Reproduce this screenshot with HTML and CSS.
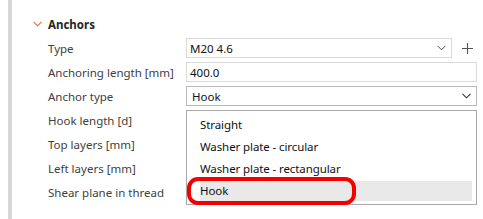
FILE: index.html
```html
<!DOCTYPE html>
<html lang="en">
<head>
  <meta charset="UTF-8" />
  <title>Anchors</title>
  <link rel="stylesheet" href="styles.css">
</head>
<body>
  <div class="page">
    <div class="side-bar"></div>

    <div class="panel">
      <div class="section-head">
        <svg class="chevron" width="9" height="6" viewBox="0 0 9 6">
          <path d="M0.5 0.8 L4.5 4.8 L8.5 0.8" fill="none" stroke="#e67a45" stroke-width="1.2"/>
        </svg>
        <span>Anchors</span>
      </div>

      <div class="props">
        <div class="label">Type</div>
        <div class="field with-add">
          <div class="box combo">
            <span>M20 4.6</span>
            <svg width="9" height="6" viewBox="0 0 9 6"><path d="M0.5 0.8 L4.5 4.8 L8.5 0.8" fill="none" stroke="#555" stroke-width="1"/></svg>
          </div>
          <svg class="add" width="11" height="11" viewBox="0 0 11 11">
            <path d="M5.5 0 V11 M0 5.5 H11" stroke="#555" stroke-width="1.1"/>
          </svg>
        </div>

        <div class="label">Anchoring length [mm]</div>
        <div class="field">
          <div class="box">400.0</div>
        </div>

        <div class="label">Anchor type</div>
        <div class="field">
          <div class="box combo active">
            <span>Hook</span>
            <svg width="9" height="6" viewBox="0 0 9 6"><path d="M0.5 0.8 L4.5 4.8 L8.5 0.8" fill="none" stroke="#333" stroke-width="1.1"/></svg>
          </div>
        </div>

        <div class="label">Hook length [d]</div>
        <div class="field"></div>

        <div class="label">Top layers [mm]</div>
        <div class="field"></div>

        <div class="label">Left layers [mm]</div>
        <div class="field"></div>

        <div class="label">Shear plane in thread</div>
        <div class="field"></div>
      </div>
    </div>

    <!-- open combo list -->
    <div class="dropdown">
      <div class="option">Straight</div>
      <div class="option">Washer plate - circular</div>
      <div class="option">Washer plate - rectangular</div>
      <div class="option selected">Hook</div>
    </div>

    <div class="mark"></div>
  </div>
</body>
</html>
```

FILE: styles.css
```css
body {
  margin: 0;
  padding: 0;
  background-color: #fff;
  font-family: "Noto Sans", "Open Sans", sans-serif;
  font-size: 11.5px;
  color: #1a1a1a;
}

.page {
  position: relative;
  display: flex;
  width: 483px;
  height: 219px;
  overflow: hidden;
}

.side-bar {
  margin-left: 8px;
  width: 4px;
  height: 219px;
  background-color: #d6d6d6;
}

.panel {
  padding-left: 21px;
  flex: 1;
}

.section-head {
  display: flex;
  align-items: center;
  height: 20px;
  margin-top: 14px;
  margin-bottom: 2px;
  font-weight: bold;
  color: #262626;
}

.section-head .chevron {
  margin-right: 6px;
  margin-top: -1px;
}

.props {
  display: grid;
  grid-template-columns: 138px 291px;
  grid-auto-rows: 24px;
  align-items: center;
  padding-left: 15px;
}

.label {
  color: #404040;
  white-space: nowrap;
}

.field {
  display: flex;
  align-items: center;
  height: 24px;
}

.box {
  box-sizing: border-box;
  flex: 1;
  height: 20px;
  border: 1px solid #dadada;
  padding: 0 4px 0 3px;
  display: flex;
  align-items: center;
  color: #111;
}

.combo {
  justify-content: space-between;
  padding-right: 5px;
}

.combo.active {
  border-color: #b9b9b9;
  padding-left: 5px;
}

.with-add .box {
  flex: 0 0 266px;
}

.add {
  margin-left: 10px;
}

.dropdown {
  position: absolute;
  left: 186px;
  top: 110px;
  box-sizing: border-box;
  width: 291px;
  height: 95px;
  border: 1px solid #a9a9a9;
  padding: 3px 4px 2px 1px;
  background-color: #fff;
  letter-spacing: -0.1px;
}

.option {
  height: 22px;
  line-height: 22px;
  padding-left: 12px;
  color: #111;
}

.option.selected {
  background-color: #e9e9e9;
  background-clip: content-box;
  padding-top: 1px;
  padding-bottom: 1px;
  height: 20px;
  line-height: 20px;
}

.mark {
  position: absolute;
  left: 187px;
  top: 177px;
  width: 169px;
  height: 28px;
  box-sizing: border-box;
  border: 4px solid #f50000;
  border-radius: 11px;
}
```
